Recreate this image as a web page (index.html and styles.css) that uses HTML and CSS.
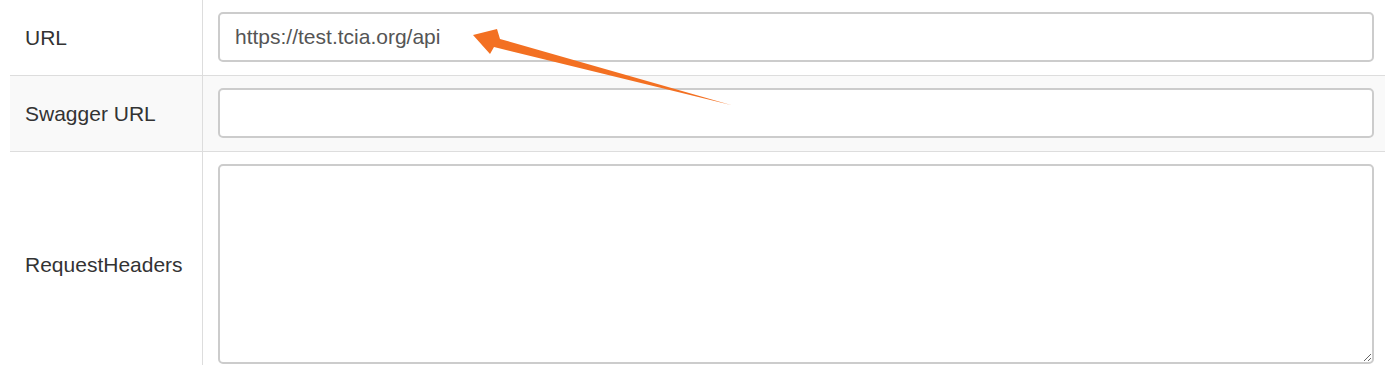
FILE: index.html
```html
<!DOCTYPE html>
<html lang="en">
<head>
  <meta charset="UTF-8">
  <meta name="viewport" content="width=device-width, initial-scale=1.0">
  <title>Service settings</title>
  <link rel="stylesheet" href="styles.css">
</head>
<body>

  <div class="page">
    <table class="settings">
      <tr>
        <td class="label">URL</td>
        <td class="field"><input type="text" class="text-input" value="https://test.tcia.org/api"></td>
      </tr>
      <tr class="striped">
        <td class="label">Swagger URL</td>
        <td class="field"><input type="text" class="text-input" value=""></td>
      </tr>
      <tr class="last">
        <td class="label">RequestHeaders</td>
        <td class="field"><textarea class="text-area"></textarea></td>
      </tr>
    </table>

    <!-- annotation arrow pointing at the url value -->
    <svg class="callout" width="260" height="80" viewBox="470 28 260 80">
      <polygon points="473,35 497,29 500,39 731,105 494,47 490,54" fill="#f37022"/>
    </svg>
  </div>

</body>
</html>
```

FILE: styles.css
```css
body {
  margin: 0;
  background-color: #ffffff;
  color: #333333;
  font-family: "Liberation Sans", Arial, sans-serif;
  font-size: 21px;
}
.page {
  position: relative;
  margin: 0 9px 0 10px;
}
.settings {
  width: 100%;
  border-collapse: collapse;
}
.settings td {
  border-top: 1px solid #dddddd;
  vertical-align: middle;
}
.settings tr:first-child td {
  border-top: none;
}
.striped td {
  background-color: #f9f9f9;
}
.label {
  width: 177px;
  padding: 0 0 0 15px;
  border-right: 1px solid #dddddd;
}
.last .label {
  padding-top: 12px;
}
.field {
  padding: 12px 11px 13px 15px;
}
.last .field {
  padding-bottom: 1px;
}
.text-input, .text-area {
  display: block;
  box-sizing: border-box;
  width: 100%;
  border: 2px solid #cccccc;
  border-radius: 5px;
  background-color: #ffffff;
  color: #555555;
  font-family: "Liberation Sans", Arial, sans-serif;
  font-size: 21px;
  padding: 0 15px;
  outline: none;
}
.text-input {
  height: 50px;
}
.text-area {
  height: 200px;
  resize: vertical;
  padding: 10px 15px;
}
.callout {
  position: absolute;
  left: 460px;
  top: 28px;
  overflow: visible;
}
```
